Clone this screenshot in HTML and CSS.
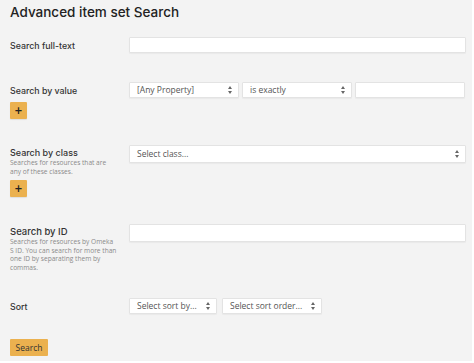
FILE: index.html
```html
<html>
<head>
<title>Advanced item set Search</title>
<link rel="stylesheet" href="styles.css">
</head>
<body>
<div class="panel">
<h1>Advanced item set Search</h1>

<div class="row row-fulltext">
  <div class="field-meta">
    <label>Search full-text</label>
  </div>
  <div class="inputs">
    <div class="text-input wide"></div>
  </div>
</div>

<div class="row row-value">
  <div class="field-meta">
    <label>Search by value</label>
    <button class="add">+</button>
  </div>
  <div class="inputs">
    <div class="select prop">[Any Property]<span class="arrows"></span></div>
    <div class="select type">is exactly<span class="arrows"></span></div>
    <div class="text-input val"></div>
  </div>
</div>

<div class="row row-class">
  <div class="field-meta">
    <label>Search by class</label>
    <p class="desc">Searches for resources that are any of these classes.</p>
    <button class="add">+</button>
  </div>
  <div class="inputs">
    <div class="select wide tall">Select class...<span class="arrows"></span></div>
  </div>
</div>

<div class="row row-id">
  <div class="field-meta">
    <label>Search by ID</label>
    <p class="desc">Searches for resources by Omeka<br>S ID. You can search for more than<br>one ID by separating them by<br>commas.</p>
  </div>
  <div class="inputs">
    <div class="text-input wide tall"></div>
  </div>
</div>

<div class="row row-sort">
  <div class="field-meta">
    <label>Sort</label>
  </div>
  <div class="inputs">
    <div class="select sort-by">Select sort by...<span class="arrows"></span></div>
    <div class="select sort-order">Select sort order...<span class="arrows"></span></div>
  </div>
</div>

<button class="submit">Search</button>
</div>
</body>
</html>
```

FILE: styles.css
```css
body {
    margin: 0;
    background: #fff;
    font-family: "Open Sans", "Liberation Sans", sans-serif;
    color: #333;
}
.panel {
    width: 472px;
    height: 361px;
    background: #f3f3f3;
    padding: 0 6px 0 10px;
    box-sizing: border-box;
    overflow: hidden;
}
h1 {
    margin: 2px 0 0 0;
    font-family: Inter, "Open Sans", sans-serif;
    font-size: 13.5px;
    line-height: 20px;
    font-weight: 500;
    color: #222;
}
.row {
    display: grid;
    grid-template-columns: 119px 1fr;
    align-items: start;
}
.row-fulltext { margin-top: 15px; }
.row-value { margin-top: 28px; }
.row-class { margin-top: 26px; }
.row-id { margin-top: 27px; }
.row-sort { margin-top: 25px; }
label {
    display: block;
    font-family: Inter, "Open Sans", sans-serif;
    font-size: 8.8px;
    line-height: 17px;
    font-weight: 500;
    color: #333;
}
.row-class label, .row-id label {
    font-size: 9px;
    line-height: 12px;
    padding-top: 2px;
}
.row-id label {
    font-size: 9.5px;
}
.desc {
    margin: 0;
    width: 107px;
    font-size: 6.6px;
    line-height: 8.6px;
    color: #8a8a8a;
}
.row-id .desc {
    width: 118px;
}
.add {
    display: block;
    width: 17px;
    height: 17px;
    margin-top: 3px;
    padding: 0;
    border: 0;
    border-radius: 1px;
    background: #ebb14f;
    color: #222;
    font-family: "DejaVu Sans", sans-serif;
    font-weight: bold;
    font-size: 10px;
    line-height: 17px;
    text-align: center;
    box-shadow: 0 1px 1px rgba(0,0,0,0.08);
}
.row-class .add { margin-top: 4px; }
.inputs {
    display: flex;
    gap: 3px;
}
.text-input, .select {
    box-sizing: border-box;
    height: 16px;
    background: #fff;
    border: 1px solid #e3e3e3;
    border-radius: 1px;
    box-shadow: 0 1px 1px rgba(0,0,0,0.04);
}
.wide { width: 337px; }
.tall { height: 18px; }
.select {
    position: relative;
    padding: 0 14px 0 7px;
    font-size: 8.5px;
    line-height: 14px;
    color: #555;
    white-space: nowrap;
    overflow: hidden;
}
.tall.select { line-height: 16px; }
.arrows {
    position: absolute;
    right: 5px;
    top: 50%;
    width: 5px;
    height: 8px;
    margin-top: -4px;
}
.arrows::before, .arrows::after {
    content: "";
    position: absolute;
    left: 0;
    border-left: 2.5px solid transparent;
    border-right: 2.5px solid transparent;
}
.arrows::before {
    top: 0;
    border-bottom: 3px solid #666;
}
.arrows::after {
    bottom: 0;
    border-top: 3px solid #666;
}
.prop { width: 110px; }
.type { width: 110px; }
.val { width: 110px; }
.sort-by { width: 88px; }
.sort-order { width: 100px; margin-left: 2px; }
.submit {
    display: block;
    margin-top: 24px;
    height: 17px;
    width: 38px;
    padding: 0;
    border: 0;
    border-radius: 1px;
    background: #ebb14f;
    color: #333;
    font-family: "Open Sans", "Liberation Sans", sans-serif;
    font-size: 8.5px;
    line-height: 17px;
    text-align: center;
}
```
